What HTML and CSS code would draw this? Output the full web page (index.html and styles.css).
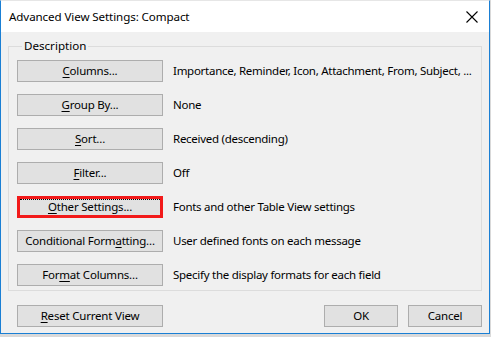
FILE: index.html
```html
<!DOCTYPE html>
<html>
<head>
<meta charset="utf-8">
<link rel="stylesheet" href="styles.css">
</head>
<body>
<div class="window">
  <div class="titlebar">
    <span class="title">Advanced View Settings: Compact</span>
    <svg class="close" width="12" height="12" viewBox="0 0 12 12"><path d="M0.5 0.5 L11.5 11.5 M11.5 0.5 L0.5 11.5" stroke="#000" stroke-width="1.1" fill="none"/></svg>
  </div>
  <div class="content">
    <fieldset class="group">
      <legend>Description</legend>
      <div class="row"><button class="btn"><u>C</u>olumns...</button><span class="desc">Importance, Reminder, Icon, Attachment, From, Subject, ...</span></div>
      <div class="row"><button class="btn"><u>G</u>roup By...</button><span class="desc">None</span></div>
      <div class="row"><button class="btn"><u>S</u>ort...</button><span class="desc">Received (descending)</span></div>
      <div class="row"><button class="btn"><u>F</u>ilter...</button><span class="desc">Off</span></div>
      <div class="row"><button class="btn focused"><u>O</u>ther Settings...</button><span class="desc">Fonts and other Table View settings</span></div>
      <div class="row"><button class="btn">Conditional Form<u>a</u>tting...</button><span class="desc">User defined fonts on each message</span></div>
      <div class="row"><button class="btn">For<u>m</u>at Columns...</button><span class="desc">Specify the display formats for each field</span></div>
    </fieldset>
    <div class="footer">
      <button class="btn"><u>R</u>eset Current View</button>
      <div class="spacer"></div>
      <button class="btn small">OK</button>
      <button class="btn small">Cancel</button>
    </div>
  </div>
</div>
</body>
</html>
```
FILE: styles.css
```css
* { box-sizing: border-box; }
html, body { margin: 0; padding: 0; }
body {
  width: 491px;
  height: 337px;
  background: #d9d9d9;
  font-family: "Noto Sans", "Open Sans", sans-serif;
  font-size: 11.5px;
  color: #000;
  overflow: hidden;
}
.window {
  width: 490px;
  height: 334px;
  border: 1px solid #1a7fd4;
  border-top-color: #e6e6e6;
  background: #f0f0f0;
  display: flex;
  flex-direction: column;
}
.titlebar {
  height: 31px;
  background: #fff;
  display: flex;
  align-items: center;
  padding-left: 8px;
  padding-right: 11px;
  flex: none;
}
.title {
  flex: 1;
  font-size: 11.6px;
  letter-spacing: -0.1px;
  line-height: 16px;
  padding-top: 1px;
}
.close { display: block; }
.content {
  flex: 1;
  padding: 6px 7px 0 7px;
  display: flex;
  flex-direction: column;
}
.group {
  margin: 0;
  border: 1px solid #dcdcdc;
  padding: 6px 8px 4px 8px;
  display: flex;
  flex-direction: column;
  gap: 12px;
  min-width: 0;
}
.group legend {
  padding: 0 2px;
  margin-left: 5px;
  line-height: 16px;
  font-size: 11.6px;
}
.row {
  display: flex;
  align-items: center;
  gap: 10px;
}
.btn {
  font-family: inherit;
  font-size: 11.5px;
  letter-spacing: -0.2px;
  color: #000;
  background: #e1e1e1;
  border: 1px solid #adadad;
  width: 146px;
  height: 22px;
  padding: 0;
  margin: 0;
  line-height: 18px;
  flex: none;
  position: relative;
}
.btn u { text-decoration-thickness: 1px; text-underline-offset: 2px; }
.desc { white-space: nowrap; line-height: 16px; letter-spacing: -0.27px; }
.focused::before {
  content: "";
  position: absolute;
  left: 2px; right: 2px; top: 2px; bottom: 2px;
  border-top: 1px dotted #000;
}
.focused::after {
  content: "";
  position: absolute;
  left: -1px; right: -1px; top: -1px; bottom: -1px;
  border: 3px solid #f21a1a;
}
.footer {
  display: flex;
  align-items: center;
  padding: 14px 0 0 9px;
  gap: 10px;
}
.spacer { flex: 1; }
.btn.small { width: 74px; }
```
